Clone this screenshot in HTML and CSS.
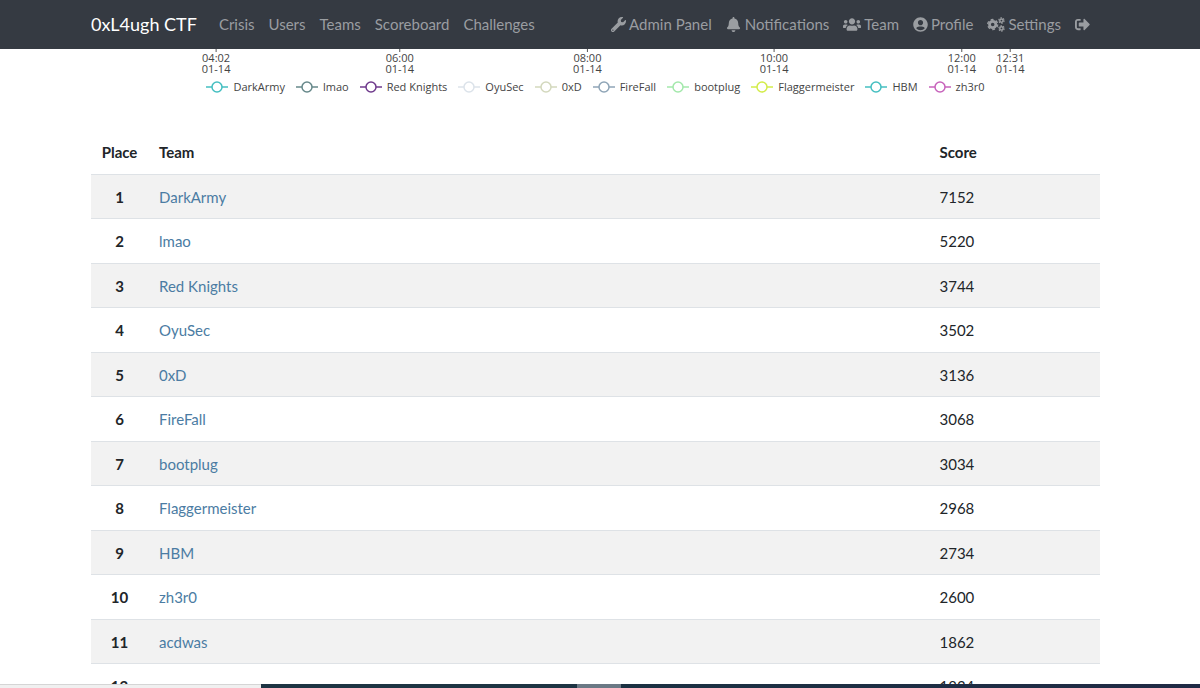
FILE: index.html
```html
<!DOCTYPE html>
<html lang="en">
<head>
  <meta charset="UTF-8">
  <meta name="viewport" content="width=device-width, initial-scale=1">
  <title>0xL4ugh CTF</title>
  <link rel="stylesheet" href="styles.css">
</head>
<body>
  <nav class="navbar">
    <div class="container navbar-inner">
      <a class="navbar-brand" href="#">0xL4ugh CTF</a>
      <div class="navbar-nav">
        <a class="nav-link" href="#">Crisis</a>
        <a class="nav-link" href="#">Users</a>
        <a class="nav-link" href="#">Teams</a>
        <a class="nav-link" href="#">Scoreboard</a>
        <a class="nav-link" href="#">Challenges</a>
      </div>
      <div class="navbar-nav navbar-right">
        <a class="nav-link" href="#">
          <svg class="icon" viewBox="0 0 512 512"><path d="M507.73 109.1c-2.24-9.03-13.54-12.09-20.12-5.51l-74.36 74.36-67.88-11.31-11.31-67.88 74.36-74.36c6.62-6.62 3.43-17.9-5.66-20.16-47.38-11.74-99.55.91-136.58 37.93-39.64 39.64-50.55 97.1-34.05 147.2L18.74 402.76c-24.99 24.99-24.99 65.51 0 90.5 24.99 24.99 65.51 24.99 90.5 0l213.21-213.21c50.12 16.71 107.47 5.68 147.37-34.22 37.07-37.07 49.7-89.32 37.91-136.73zM64 472c-13.25 0-24-10.75-24-24 0-13.26 10.75-24 24-24s24 10.74 24 24c0 13.25-10.75 24-24 24z"/></svg>Admin Panel</a>
        <a class="nav-link" href="#">
          <svg class="icon icon-fixed" viewBox="-32 0 512 512"><path d="M224 512c35.32 0 63.97-28.65 63.97-64H160.03c0 35.35 28.65 64 63.97 64zm215.39-149.71c-19.32-20.76-55.47-51.99-55.47-154.29 0-77.7-54.48-139.9-127.94-155.16V32c0-17.67-14.32-32-31.98-32s-31.98 14.33-31.98 32v20.84C118.56 68.1 64.08 130.3 64.08 208c0 102.3-36.15 133.53-55.47 154.29-6 6.45-8.66 14.16-8.61 21.71.11 16.4 12.98 32 32.1 32h383.8c19.12 0 32-15.6 32.1-32 .05-7.55-2.61-15.27-8.61-21.71z"/></svg>Notifications</a>
        <a class="nav-link" href="#">
          <svg class="icon icon-wide" viewBox="0 0 640 512"><path d="M96 224c35.3 0 64-28.7 64-64s-28.7-64-64-64-64 28.7-64 64 28.7 64 64 64zm448 0c35.3 0 64-28.7 64-64s-28.7-64-64-64-64 28.7-64 64 28.7 64 64 64zm32 32h-64c-17.6 0-33.5 7.1-45.1 18.6 40.3 22.1 68.9 62 75.1 109.4h66c17.7 0 32-14.3 32-32v-32c0-35.3-28.7-64-64-64zm-256 0c61.9 0 112-50.1 112-112S381.9 32 320 32 208 82.1 208 144s50.1 112 112 112zm76.8 32h-8.3c-20.8 10-43.9 16-68.5 16s-47.6-6-68.5-16h-8.3C179.6 288 128 339.6 128 403.2V432c0 26.5 21.5 48 48 48h288c26.5 0 48-21.5 48-48v-28.8c0-63.6-51.6-115.2-115.2-115.2zm-223.7-13.4C161.5 263.1 145.6 256 128 256H64c-35.3 0-64 28.7-64 64v32c0 17.7 14.3 32 32 32h65.9c6.3-47.4 34.9-87.3 75.2-109.4z"/></svg>Team</a>
        <a class="nav-link" href="#">
          <svg class="icon" viewBox="0 0 496 512"><path d="M248 8C111 8 0 119 0 256s111 248 248 248 248-111 248-248S385 8 248 8zm0 96c48.6 0 88 39.4 88 88s-39.4 88-88 88-88-39.4-88-88 39.4-88 88-88zm0 344c-58.7 0-111.3-26.6-146.5-68.2 18.8-35.4 55.6-59.8 98.5-59.8 2.4 0 4.8.4 7.1 1.1 13 4.2 26.6 6.9 40.9 6.9 14.3 0 28-2.7 40.9-6.9 2.3-.7 4.7-1.1 7.1-1.1 42.9 0 79.7 24.4 98.5 59.8C359.3 421.4 306.7 448 248 448z"/></svg>Profile</a>
        <a class="nav-link" href="#">
          <svg class="icon icon-wide" viewBox="0 0 640 512">
            <g fill="none" stroke="currentColor">
              <circle cx="202" cy="256" r="113" stroke-width="98"/>
              <circle cx="202" cy="256" r="176" stroke-width="50" stroke-dasharray="102 82.300"/>
              <circle cx="514" cy="116" r="59" stroke-width="54"/>
              <circle cx="514" cy="116" r="96" stroke-width="38" stroke-dasharray="56 44.500"/>
              <circle cx="514" cy="396" r="59" stroke-width="54"/>
              <circle cx="514" cy="396" r="96" stroke-width="38" stroke-dasharray="56 44.500"/>
            </g>
          </svg>Settings</a>
        <a class="nav-link" href="#" aria-label="Logout">
          <svg class="icon" viewBox="0 0 512 512"><path d="M497 273L329 441c-15 15-41 4.500-41-17v-96H152c-13.300 0-24-10.700-24-24v-96c0-13.300 10.700-24 24-24h136V88c0-21.400 25.900-32 41-17l168 168c9.300 9.400 9.300 24.600 0 34zM192 436v-40c0-6.600-5.400-12-12-12H96c-17.700 0-32-14.300-32-32V160c0-17.700 14.300-32 32-32h84c6.600 0 12-5.400 12-12V76c0-6.600-5.400-12-12-12H96c-53 0-96 43-96 96v192c0 53 43 96 96 96h84c6.600 0 12-5.400 12-12z"/></svg></a>
      </div>
    </div>
  </nav>

  <main class="page">
    <div class="container">
      <div class="score-graph">
        <svg class="axis" role="img" aria-label="Time axis">
          <g class="ticks">
            <line x1="12.4%" x2="12.4%" y1="0" y2="3"/>
            <line x1="30.6%" x2="30.6%" y1="0" y2="3"/>
            <line x1="49.2%" x2="49.2%" y1="0" y2="3"/>
            <line x1="67.7%" x2="67.7%" y1="0" y2="3"/>
            <line x1="86.3%" x2="86.3%" y1="0" y2="3"/>
            <line x1="91.1%" x2="91.1%" y1="0" y2="3"/>
          </g>
          <g class="labels">
            <text x="12.4%" y="13">04:02</text><text x="12.4%" y="24">01-14</text>
            <text x="30.6%" y="13">06:00</text><text x="30.6%" y="24">01-14</text>
            <text x="49.2%" y="13">08:00</text><text x="49.2%" y="24">01-14</text>
            <text x="67.7%" y="13">10:00</text><text x="67.7%" y="24">01-14</text>
            <text x="86.3%" y="13">12:00</text><text x="86.3%" y="24">01-14</text>
            <text x="91.1%" y="13">12:31</text><text x="91.1%" y="24">01-14</text>
          </g>
        </svg>
        <ul class="legend">
          <li class="teal"><svg class="marker" viewBox="0 0 22 14"><path d="M0 7h22"/><circle cx="11" cy="7" r="5"/></svg>DarkArmy</li>
          <li class="slate"><svg class="marker" viewBox="0 0 22 14"><path d="M0 7h22"/><circle cx="11" cy="7" r="5"/></svg>lmao</li>
          <li class="purple"><svg class="marker" viewBox="0 0 22 14"><path d="M0 7h22"/><circle cx="11" cy="7" r="5"/></svg>Red Knights</li>
          <li class="pale"><svg class="marker" viewBox="0 0 22 14"><path d="M0 7h22"/><circle cx="11" cy="7" r="5"/></svg>OyuSec</li>
          <li class="sand"><svg class="marker" viewBox="0 0 22 14"><path d="M0 7h22"/><circle cx="11" cy="7" r="5"/></svg>0xD</li>
          <li class="steel"><svg class="marker" viewBox="0 0 22 14"><path d="M0 7h22"/><circle cx="11" cy="7" r="5"/></svg>FireFall</li>
          <li class="mint"><svg class="marker" viewBox="0 0 22 14"><path d="M0 7h22"/><circle cx="11" cy="7" r="5"/></svg>bootplug</li>
          <li class="lime"><svg class="marker" viewBox="0 0 22 14"><path d="M0 7h22"/><circle cx="11" cy="7" r="5"/></svg>Flaggermeister</li>
          <li class="teal"><svg class="marker" viewBox="0 0 22 14"><path d="M0 7h22"/><circle cx="11" cy="7" r="5"/></svg>HBM</li>
          <li class="pink"><svg class="marker" viewBox="0 0 22 14"><path d="M0 7h22"/><circle cx="11" cy="7" r="5"/></svg>zh3r0</li>
        </ul>
      </div>

      <table class="scoreboard">
        <thead>
          <tr><th class="place" scope="col">Place</th><th scope="col">Team</th><th class="score" scope="col">Score</th></tr>
        </thead>
        <tbody>
          <tr><th class="place" scope="row">1</th><td><a href="#">DarkArmy</a></td><td>7152</td></tr>
          <tr><th class="place" scope="row">2</th><td><a href="#">lmao</a></td><td>5220</td></tr>
          <tr><th class="place" scope="row">3</th><td><a href="#">Red Knights</a></td><td>3744</td></tr>
          <tr><th class="place" scope="row">4</th><td><a href="#">OyuSec</a></td><td>3502</td></tr>
          <tr><th class="place" scope="row">5</th><td><a href="#">0xD</a></td><td>3136</td></tr>
          <tr><th class="place" scope="row">6</th><td><a href="#">FireFall</a></td><td>3068</td></tr>
          <tr><th class="place" scope="row">7</th><td><a href="#">bootplug</a></td><td>3034</td></tr>
          <tr><th class="place" scope="row">8</th><td><a href="#">Flaggermeister</a></td><td>2968</td></tr>
          <tr><th class="place" scope="row">9</th><td><a href="#">HBM</a></td><td>2734</td></tr>
          <tr><th class="place" scope="row">10</th><td><a href="#">zh3r0</a></td><td>2600</td></tr>
          <tr><th class="place" scope="row">11</th><td><a href="#">acdwas</a></td><td>1862</td></tr>
          <tr><th class="place" scope="row">12</th><td></td><td>1834</td></tr>
        </tbody>
      </table>
    </div>
  </main>

  <div class="taskbar">
    <div class="taskbar-search"></div>
    <div class="taskbar-apps"></div>
    <div class="taskbar-active"></div>
    <div class="taskbar-tray"></div>
  </div>
</body>
</html>
```
FILE: styles.css
```css
* {
  box-sizing: border-box;
}

body {
  margin: 0;
  background: #fff;
  color: #212529;
  font-family: Lato, "Open Sans", sans-serif;
  font-size: 15px;
  line-height: 1.5;
}

a {
  color: #4b7ca3;
  text-decoration: none;
}

a:hover {
  text-decoration: underline;
}

.container {
  width: 85%;
  max-width: 1009px;
  margin: 0 auto;
}

/* Navbar */
.navbar {
  position: fixed;
  top: 0;
  left: 0;
  right: 0;
  z-index: 10;
  height: 49px;
  padding-right: 9px;
  background: #353a42;
}

.navbar-inner {
  display: flex;
  align-items: center;
  height: 100%;
}

.navbar-brand {
  margin-right: 15px;
  color: #fff;
  font-size: 18px;
  white-space: nowrap;
}

.navbar-nav {
  display: flex;
}

.navbar-right {
  margin-left: auto;
  padding-right: 3px;
}

.nav-link {
  display: flex;
  align-items: center;
  gap: 3px;
  padding: 7px;
  color: #9a9da1;
  white-space: nowrap;
}

.nav-link:hover {
  color: #c8cacc;
  text-decoration: none;
}

.icon {
  width: 15px;
  height: 15px;
  fill: currentColor;
}

.icon-fixed {
  margin-right: 1px;
}

.icon-wide {
  width: 18px;
}

/* Score graph */
.page {
  height: 100vh;
  padding: 49px 9px 0 0;
  overflow: hidden;
}

.axis {
  display: block;
  width: 100%;
  height: 28px;
}

.ticks {
  stroke: #555;
}

.labels {
  fill: #444;
  font-family: "Open Sans", sans-serif;
  font-size: 11px;
  text-anchor: middle;
}

.legend {
  display: flex;
  justify-content: center;
  gap: 11px;
  margin: 0;
  padding: 0;
  list-style: none;
  color: #444;
  font-family: "Open Sans", sans-serif;
  font-size: 11px;
  line-height: 20px;
}

.legend li {
  display: flex;
  align-items: center;
  gap: 5px;
  white-space: nowrap;
}

.marker {
  width: 22px;
  height: 14px;
  fill: #fff;
  stroke-width: 1.5;
}

.teal { stroke: #45bfc1; }
.slate { stroke: #66888a; }
.purple { stroke: #6f3a8c; }
.pale { stroke: #dce3ea; }
.sand { stroke: #d3d8bd; }
.steel { stroke: #8fa5b7; }
.mint { stroke: #a3e8ab; }
.lime { stroke: #d3ec4a; }
.pink { stroke: #c763bb; }

/* Scoreboard */
.scoreboard {
  width: 100%;
  margin-top: 33px;
  border-collapse: collapse;
  table-layout: fixed;
}

.scoreboard th,
.scoreboard td {
  padding: 11px 11px 10px;
  border-top: 1px solid #dee2e6;
  text-align: left;
}

.scoreboard thead th {
  border-top: 0;
}

.scoreboard .place {
  width: 57px;
  padding-left: 0;
  padding-right: 0;
  text-align: center;
}

.scoreboard .score {
  width: 17%;
}

.scoreboard tbody tr:nth-child(odd) {
  background: #f2f2f2;
}

/* Taskbar */
.taskbar {
  position: fixed;
  left: 0;
  right: 0;
  bottom: 0;
  z-index: 10;
  display: grid;
  grid-template-columns: 261fr 316fr 44fr 579fr;
  height: 4px;
}

.taskbar-search {
  background: #f0f0f0;
  border-top: 1px solid #d5d5d5;
}

.taskbar-apps {
  background: #1d3443;
}

.taskbar-active {
  background: #6b7985;
}

.taskbar-tray {
  background: linear-gradient(90deg, #1b3142, #202a45);
}
```
